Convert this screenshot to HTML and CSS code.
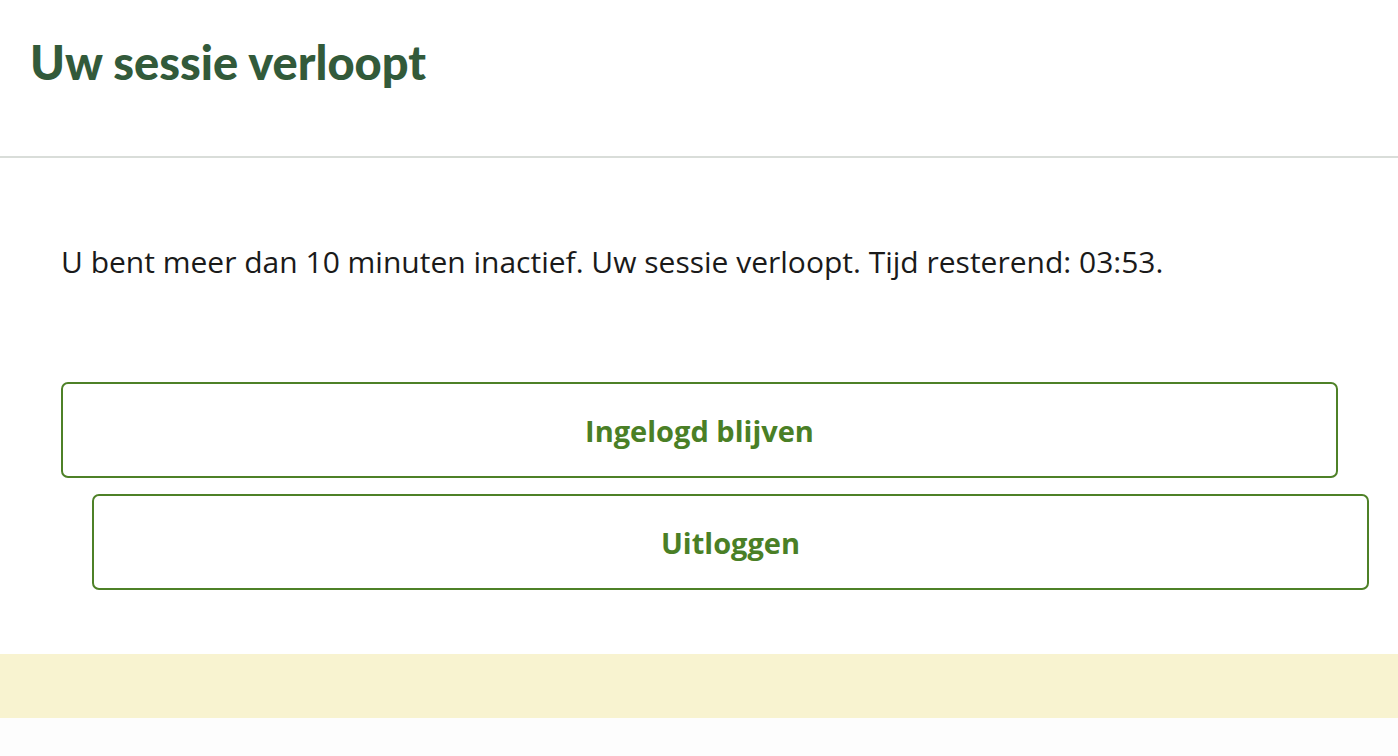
FILE: index.html
```html
<!DOCTYPE html>
<html lang="nl">
<head>
<meta charset="utf-8">
<title>Uw sessie verloopt</title>
<link rel="stylesheet" href="styles.css">
</head>
<body>
<div class="dialog">
  <header class="dialog-header">
    <h1 class="dialog-title">Uw sessie verloopt</h1>
  </header>
  <section class="dialog-body">
    <p class="dialog-text">U bent meer dan 10 minuten inactief. Uw sessie verloopt. Tijd resterend: 03:53.</p>
    <div class="dialog-actions">
      <button class="btn">Ingelogd blijven</button>
      <button class="btn btn-second">Uitloggen</button>
    </div>
  </section>
  <div class="dialog-footer"></div>
</div>
</body>
</html>
```
FILE: styles.css
```css
html, body {
  margin: 0;
  padding: 0;
  background: #fdfdfd;
}
body {
  font-family: "Open Sans", "Liberation Sans", sans-serif;
}
.dialog {
  width: 1398px;
  background: #ffffff;
}
.dialog-header {
  height: 158px;
  border-bottom: 2px solid #d9ddd9;
  box-sizing: border-box;
  padding: 32px 30px 0;
}
.dialog-title {
  margin: 0;
  font-family: "Lato", "Open Sans", sans-serif;
  font-size: 47px;
  line-height: 60px;
  font-weight: 900;
  color: #325a3a;
}
.dialog-body {
  padding: 84px 61px 64px;
}
.dialog-text {
  margin: 0;
  font-size: 30px;
  line-height: 40px;
  color: #1a1a1a;
}
.dialog-actions {
  display: flex;
  flex-direction: column;
  gap: 16px;
  margin-top: 100px;
}
.btn {
  width: 1277px;
  height: 96px;
  background: #ffffff;
  border: 2px solid #4e8127;
  border-radius: 7px;
  font-family: inherit;
  font-size: 29px;
  font-weight: 700;
  color: #4a7f26;
  cursor: pointer;
}
.btn-second {
  margin-left: 31px;
}
.dialog-footer {
  height: 64px;
  background: #f8f3d0;
}
```
